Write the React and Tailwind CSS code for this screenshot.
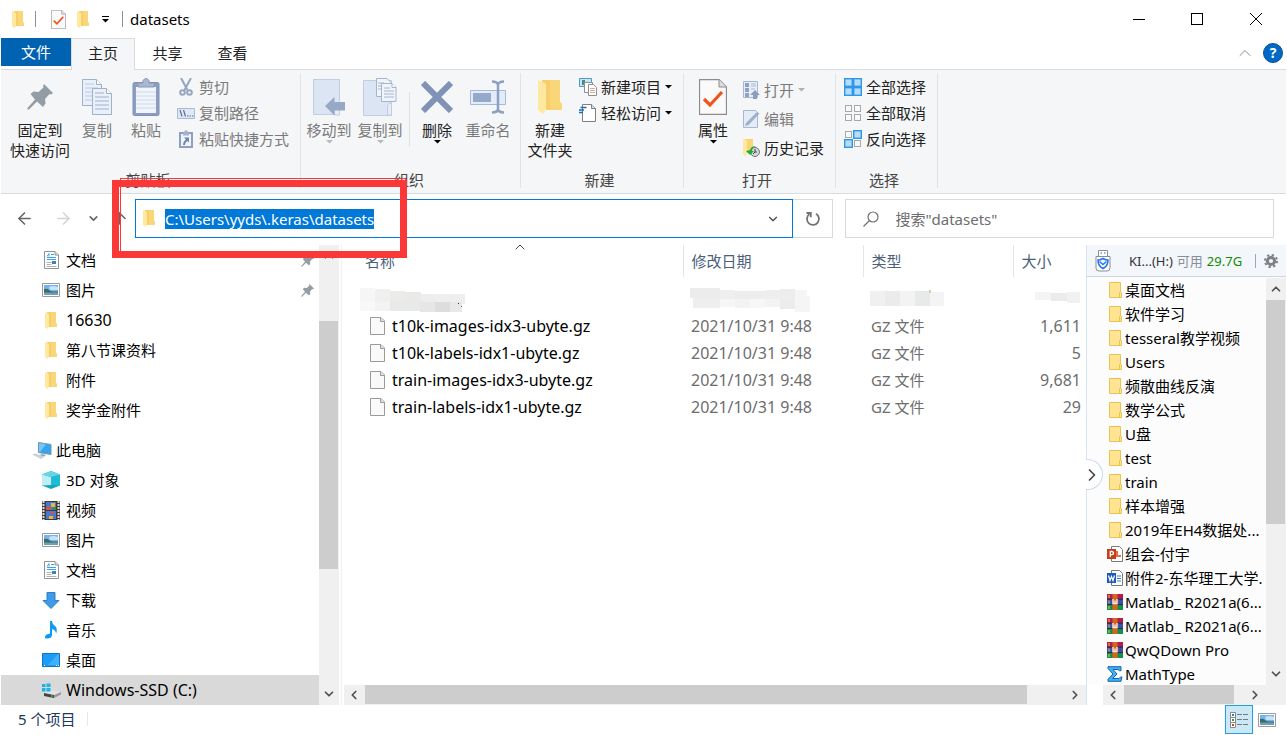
import React, { useState } from 'react';
import { ChevronDown, ChevronUp, ChevronLeft, ChevronRight, ArrowLeft, ArrowRight, ArrowUp } from 'lucide-react';

// --- Icons ---
const FolderIcon = ({ className = 'w-3 h-[17px]' }) => (
  <svg viewBox="0 0 12 17" className={className} preserveAspectRatio="none">
    <path d="M2 0h9v11l1 1v3H3z" fill="#f6cf6b" />
    <path d="M6 0h5v11l1 1v3H6z" fill="#fbdc82" opacity=".6" />
    <path d="M0 0l4 2v13l-1.5 2L0 15z" fill="#ffe8a2" />
  </svg>
);

const ClosedFolderIcon = () => (
  <svg viewBox="0 0 13 16" className="w-[13px] h-4">
    <path d="M.5.5h11v9.5l1 1v4.5H.5z" fill="#ffe593" stroke="#e9c34a" />
    <path d="M10.5 15v-4l1-1.5" fill="none" stroke="#e9c34a" />
  </svg>
);

const CheckDocIcon = ({ className }) => (
  <svg viewBox="0 0 28 36" className={className}>
    <path d="M.5.5H20L27.5 8v27.5H.5z" fill="#fafafa" stroke="#8c8c8c" strokeWidth="1.3" />
    <path d="M20 .5V8h7.5" fill="#dcdcdc" stroke="#8c8c8c" />
    <path d="M5 20l6 6L23 13" fill="none" stroke="#f2541b" strokeWidth="3.2" />
  </svg>
);

const PinIcon = ({ className }) => (
  <svg viewBox="0 0 26 26" className={className} fill="#939da5">
    <path d="M17 0l9 9-2 1.5-1.5-.5-4.5 5 .5 4.5L16 23l-6-5.5L2 25.5H.5V24L8 15.5 3.5 10l3-2.5 5 .5 5-4.5L16 2z" />
  </svg>
);

const CopyIcon = () => (
  <svg viewBox="0 0 30 36" className="w-[30px] h-9" stroke="#9fb0cc">
    <path d="M.5.5h14l5 5v21H.5z" fill="#eaf0f9" />
    <path d="M14.5.5v5h5" fill="#fff" />
    <path d="M3 5h9M3 9h13M3 13h13M3 17h13M3 21h13" stroke="#b9c8de" />
    <path d="M10.5 9.5h14l5 5v21h-19z" fill="#eaf0f9" />
    <path d="M24.5 9.5v5h5" fill="#fff" />
    <path d="M13 14h9M13 18h14M13 22h14M13 26h14M13 30h14" />
  </svg>
);

const PasteIcon = () => (
  <svg viewBox="0 0 28 38" className="w-7 h-[38px]">
    <rect x="1" y="4.5" width="26" height="33" rx="1.5" fill="#8c9dc1" stroke="#7f90b4" />
    <path d="M4 9h20v26H4z" fill="#f0f5fc" />
    <path d="M4 14h20M4 18h20M4 22h20M4 26h20M4 30h20" stroke="#cdd9ea" />
    <path d="M6 5h5V2.5Q14-1.5 17 2.5V5h5v4H6z" fill="#a9b7d0" stroke="#8797b5" />
  </svg>
);

const CutIcon = () => (
  <svg viewBox="0 0 14 18" className="w-3.5 h-[18px]" fill="none" stroke="#94a5c2">
    <path d="M2 0l6.5 12M12 0L5.500 12" strokeWidth="2" />
    <circle cx="3.5" cy="14.5" r="2.3" strokeWidth="2" />
    <circle cx="10.5" cy="14.5" r="2.3" strokeWidth="2" />
  </svg>
);

const CopyPathIcon = () => (
  <svg viewBox="0 0 18 11" className="w-[18px] h-[11px]">
    <path d="M.5.5h17v10H.5z" fill="#dfe9f6" stroke="#a9bad4" />
    <path d="M3 2l2 6.500M6.500 2l2 6.500M10 8h1.500M12.500 8H14M15 8h1.500" stroke="#5c7196" strokeWidth="1.200" />
  </svg>
);

const ShortcutIcon = () => (
  <svg viewBox="0 0 14 18" className="w-3.5 h-[18px]">
    <path d="M1 3h12v14H1z" fill="#f0f5fc" stroke="#8ea0c0" strokeWidth="2" />
    <path d="M4 3.5V2.500h1.500V.5h3v2H10v3H4z" fill="#a3b3ce" />
    <path d="M5 7.5h5v5L8.500 11Q6 12 6 15H4q0-3.500 2.800-5.500z" fill="#6f86b0" />
  </svg>
);

const MoveToIcon = () => (
  <svg viewBox="0 0 32 37" className="w-8 h-[37px]">
    <path d="M.5.5h26v35H.5z" fill="#dbe5f4" stroke="#c0cde2" />
    <path d="M24.5 24q-3 0-3 4v8h5V24" fill="#e6edf8" stroke="#c0cde2" />
    <path d="M12 27l9.5-9v5H32v8.5H21.5v5z" fill="#98a8c7" />
  </svg>
);

const CopyToIcon = () => (
  <svg viewBox="0 0 34 38" className="w-[34px] h-[38px]">
    <path d="M.5 2.5h28v35H.5z" fill="#dbe5f4" stroke="#c0cde2" />
    <path d="M24.5 37v-9q0-3 4-3v12z" fill="#e6edf8" stroke="#c0cde2" />
    <g stroke="#a5b4ce">
      <path d="M13.5.5H24l4 4v14H13.5z" fill="#f0f5fc" />
      <path d="M15 5h6M15 8h6M15 11h6" />
      <path d="M18.5 5.500H29l4 4v14H18.500z" fill="#f0f5fc" />
      <path d="M29 5.500v4h4M21 10h6M21 13h10M21 16h10M21 19h10" fill="#fff" />
    </g>
  </svg>
);

const DeleteIcon = () => (
  <svg viewBox="0 0 32 32" className="w-8 h-8">
    <path d="M2 2l28 28M30 2L2 30" stroke="#8092b5" strokeWidth="6" />
  </svg>
);

const RenameIcon = () => (
  <svg viewBox="0 0 36 34" className="w-9 h-[34px]">
    <path d="M.5 10.500h35v14H.5z" fill="#e3ecf8" stroke="#a5b9d8" />
    <path d="M3 13h18v9H3z" fill="#96a9cb" />
    <path d="M22 1.500q5 0 6 3 1-3 6-3M22 32.500q5 0 6-3 1 3 6 3M28 4v26" fill="none" stroke="#8ba0c2" strokeWidth="2.500" />
  </svg>
);

const NewItemIcon = () => (
  <svg viewBox="0 0 18 18" className="w-[18px] h-[18px]">
    <path d="M.5.5h12v8H.5z" fill="#c7e6f5" stroke="#4a9cc4" />
    <path d="M3 2h3v5H3z" fill="#4c8c7c" />
    <path d="M5.5 4.500h8v10h-8z" fill="#fff" stroke="#8f8f8f" />
    <path d="M9.5 6.500h5l3 3v8h-8z" fill="#fff" stroke="#8f8f8f" />
    <path d="M11 10.500h5M11 12.500h5M11 14.500h5" stroke="#e5a79b" />
  </svg>
);

const EasyAccessIcon = () => (
  <svg viewBox="0 0 18 18" className="w-[18px] h-[18px]">
    <path d="M3.5.5h9l4 4v13h-13z" fill="#fff" stroke="#7f7f7f" />
    <path d="M12.5.5v4h4" fill="#ddd" stroke="#7f7f7f" />
    <path d="M1.5 3.500h6M0 6h5M0 8.500h4" stroke="#1e6fb8" strokeWidth="1.400" />
  </svg>
);

const OpenIcon = () => (
  <svg viewBox="0 0 17 18" className="w-[17px] h-[18px]">
    <path d="M.5.5h14v16H.5z" fill="#e8eef8" stroke="#a9b8d1" />
    <path d="M2 2h4v4H2zM2 7h4v4H2zM2 12h4v4H2z" fill="#8fa1c2" />
    <path d="M8 3h5M8 5h5M8 8h4" stroke="#a9b8d1" />
    <path d="M12 9l5 5h-3v4h-4v-4H7z" fill="#8b9cbf" />
  </svg>
);

const EditIcon = () => (
  <svg viewBox="0 0 17 18" className="w-[17px] h-[18px]">
    <path d="M.5.5h12l2 2v15H.5z" fill="#e4ecf8" stroke="#a9b8d1" />
    <path d="M2 16l1-3L14 2l2.500 1.500L5.500 15z" fill="#9dafcc" />
  </svg>
);

const HistoryIcon = () => (
  <svg viewBox="0 0 17 18" className="w-[17px] h-[18px]">
    <path d="M2 0h8v14H2z" fill="#f9d673" />
    <path d="M0 0l4 2v13l-1.500 2L0 15z" fill="#ffe8a2" />
    <circle cx="12" cy="13" r="4.500" fill="#d5d8d8" stroke="#6f7675" />
    <path d="M12 10v3l-2 2M12 13h2" stroke="#444" fill="none" />
    <path d="M3 12l4-1q1-4 6-4-4 2-4 5h2l-4 4z" fill="#22a83e" />
  </svg>
);

const SELECT_CELLS = [[0, 0], [9, 0], [0, 9], [9, 9]];

const SelectIcon = ({ active }) => (
  <svg viewBox="0 0 18 18" className="w-[18px] h-[18px]">
    {SELECT_CELLS.map(([x, y], i) => (
      active[i]
        ? <rect key={i} x={x + 0.7} y={y + 0.7} width="7.6" height="7.6" fill="#b5ddfb" stroke="#2f97e8" strokeWidth="1.4" />
        : <rect key={i} x={x + 1.5} y={y + 1.5} width="6" height="6" fill="#fafafa" stroke="#a8a8a8" />
    ))}
  </svg>
);

const DocumentIcon = () => (
  <svg viewBox="0 0 15 18" className="w-[15px] h-[18px]">
    <path d="M.5.5H11l3.5 3.5v13.5H.5z" fill="#fff" stroke="#929292" />
    <path d="M11 .5V4h3.5" fill="#ddd" stroke="#929292" />
    <path d="M3 5.500L5 2.500v3M7 3.500h3M3 6.500h9M3 8.500h9" fill="none" stroke="#3aa3e3" />
    <path d="M2.500 11.500h5M2.500 13.500h5M2.500 15.500h10" stroke="#b2b2b2" />
    <path d="M8 10h4v3H8z" fill="#3c80b5" />
  </svg>
);

const PictureIcon = () => (
  <svg viewBox="0 0 18 14" className="w-[18px] h-3.5">
    <path d="M.5.5h17v13H.5z" fill="#fff" stroke="#9b9b9b" />
    <path d="M2 2h14v10H2z" fill="#74b3ee" />
    <path d="M7 4q4-2 9 0v3H8z" fill="#c6e3fa" />
    <path d="M2 6q3-1 5 1t9 1.500V10H2z" fill="#3d6b62" />
    <path d="M2 9.500h14V12H2z" fill="#6c9fb8" />
  </svg>
);

const ComputerIcon = () => (
  <svg viewBox="0 0 20 17" className="w-5 h-[17px]">
    <path d="M6.500.5l12.500 2v10l-12.500-2z" fill="#35a6ec" stroke="#7295ac" />
    <path d="M7 1l7 1.200-6 7.800H7z" fill="#74c6f8" />
    <path d="M9 12l5 1-2 1.500-4-1z" fill="#929da6" />
    <path d="M0 12.500l3-1 10 3-4 2.500z" fill="#cbd2d7" />
  </svg>
);

const CubeIcon = () => (
  <svg viewBox="0 0 18 18" className="w-[18px] h-[18px]">
    <path d="M9 0l9 3.500v11L9 18 0 14.500v-11z" fill="#17a5bd" />
    <path d="M0 3.500L9 6v8L0 14.500z" fill="#bfeff3" />
    <path d="M9 6l9-2.500v11L9 14z" fill="#20bcd6" />
    <path d="M0 3.500L9 0l9 3.500L9 6z" fill="#68d5e3" />
  </svg>
);

const VideoIcon = () => (
  <svg viewBox="0 0 18 19" className="w-[18px] h-[19px]">
    <path d="M0 0h18v19H0z" fill="#3b3b3b" />
    <path d="M1.500 0v19M16.500 0v19" stroke="#dcdcdc" strokeWidth="2" strokeDasharray="2 1" />
    <path d="M4 1h10v8H4zM4 10h10v8H4z" fill="#4a78d0" />
    <path d="M4 6h5v3H4zM9 11h3v2H9z" fill="#e0503a" />
    <path d="M9 2h4v4H9zM7 15h4v3H7z" fill="#e8b92e" />
    <path d="M11 6h3v3h-3z" fill="#3c8c46" />
  </svg>
);

const DownloadIcon = () => (
  <svg viewBox="0 0 18 17" className="w-[18px] h-[17px]">
    <path d="M5 .5h8v8h4L9 16.500 1 8.500h4z" fill="#3f9be8" stroke="#2b7fcb" />
  </svg>
);

const MusicIcon = () => (
  <svg viewBox="0 0 12 18" className="w-3 h-[18px]" fill="#0d9bf5">
    <path d="M5 0h2q0 3 3 5t1 8q0-4-4-5v6q0 3-4 3.500T0 15.500t5-3z" />
  </svg>
);

const DesktopIcon = () => (
  <svg viewBox="0 0 18 14" className="w-[18px] h-3.5">
    <path d="M.5.5h17v13H.5z" fill="#1c9cf6" stroke="#0c74c2" />
    <path d="M6 12L16 1h1v11z" fill="#41b0fb" />
    <path d="M2 12.500h1M14 12.500h1M16 12.500h1" stroke="#fff" />
  </svg>
);

const DriveIcon = () => (
  <svg viewBox="0 0 19 15" className="w-[19px] h-[15px]">
    <path d="M2 10l6-3 11 2-7 4z" fill="#e4e4e4" />
    <path d="M2 10l10 2v3L2 13z" fill="#454545" />
    <path d="M12 12l7-3v2.500L12 15z" fill="#9a9a9a" />
    <path d="M9 13h2" stroke="#4fdc62" />
    <path d="M0 1h3.500v3H0zM4.500.5H8.500V4h-4zM0 5h3.500v3.500H0zM4.500 5h4v3.500h-4z" fill="#1ab2e8" />
  </svg>
);

const FileIcon = () => (
  <svg viewBox="0 0 15 18" className="w-[15px] h-[18px]">
    <path d="M.5.5H11l3.500 3.500v13.500H.5z" fill="#f9f9f9" stroke="#9a9a9a" />
    <path d="M10.500.5v4h4" fill="#e2e2e2" stroke="#9a9a9a" />
  </svg>
);

const PptIcon = () => (
  <svg viewBox="0 0 16 16" className="w-4 h-4">
    <path d="M4.500.5h8l3 3v12h-11z" fill="#fff" stroke="#7b7b7b" />
    <path d="M10 5v5h4" fill="none" stroke="#e66c4b" strokeWidth="2" />
    <path d="M0 3h9v10H0z" fill="#c43e1c" />
    <path d="M3.300 11V5.500h1.500q1.700 0 1.700 1.600T4.800 8.700H3.300" fill="none" stroke="#fff" strokeWidth="1.300" />
  </svg>
);

const WordIcon = () => (
  <svg viewBox="0 0 16 16" className="w-4 h-4">
    <path d="M4.500.5h8l3 3v12h-11z" fill="#fff" stroke="#7b7b7b" />
    <path d="M10 6h4M10 8.500h4M10 11h4" stroke="#2b7cd3" />
    <path d="M0 3h9v10H0z" fill="#185abd" />
    <path d="M1.500 5.500l1.500 5 1.500-4 1.500 4 1.500-5" fill="none" stroke="#fff" strokeWidth="1.200" />
  </svg>
);

const RarIcon = () => (
  <svg viewBox="0 0 16 16" className="w-4 h-4">
    <path d="M0 0h16v5H0z" fill="#b51c4b" />
    <path d="M0 5h16v5.500H0z" fill="#3d4fae" />
    <path d="M0 10.500h16V16H0z" fill="#14924b" />
    <path d="M0 5.200h16M0 10.600h16" stroke="#26263a" />
    <path d="M2 1v3M2 6.500v3M2 12v3" stroke="#f0cc3c" />
    <path d="M5.500 0h5v16h-5z" fill="#d6651f" />
    <path d="M6 5v4.500h4V5M8 6.500v3" fill="none" stroke="#f5e9dc" strokeWidth="1.400" />
  </svg>
);

const SigmaIcon = () => (
  <svg viewBox="0 0 16 16" className="w-4 h-4">
    <path d="M1 .7h13v4h-1.500L11 3.500H6L10 8l-4.500 4.500H12l1.500-1.500H15L14 15.300H1v-2L6 8 1 2.500z" fill="#3fb2f2" stroke="#1763b5" />
  </svg>
);

const UsbIcon = () => (
  <svg viewBox="0 0 16 22" className="w-4 h-[22px]" fill="none">
    <path d="M3.500.5h9v6h-9z" fill="#fff" stroke="#8b8f94" />
    <path d="M5.500 3h1.500M9 3h1.500" stroke="#8b8f94" strokeWidth="1.500" />
    <path d="M1 6.500h14V18q0 3-3 3H4q-3 0-3-3z" fill="#fff" stroke="#8b8f94" />
    <path d="M8 8.500q2 1.500 5 1.500 0 6-5 8.500-5-2.500-5-8.500 3 0 5-1.500z" stroke="#2677f0" strokeWidth="1.600" />
    <path d="M4.500 11.500L8 14.500l3.500-3" stroke="#2677f0" strokeWidth="1.500" />
  </svg>
);

const GearIcon = () => (
  <svg viewBox="0 0 14 14" className="w-3.5 h-3.5" fill="none" stroke="#7d8186">
    <circle cx="7" cy="7" r="3.600" strokeWidth="3" />
    <circle cx="7" cy="7" r="6" strokeWidth="2" strokeDasharray="2.300 2.410" />
  </svg>
);

const RefreshIcon = () => (
  <svg viewBox="0 0 16 16" className="w-4 h-4" fill="none" stroke="#737373" strokeWidth="1.800">
    <path d="M11 2.700A6 6 0 1 1 4.500 3" />
    <path d="M1.500 2h4.300v4.300" />
  </svg>
);

const SearchIcon = () => (
  <svg viewBox="0 0 16 16" className="w-4 h-4" fill="none" stroke="#707070" strokeWidth="1.200">
    <circle cx="10" cy="6" r="5" />
    <path d="M6.500 9.500L.5 15.500" />
  </svg>
);

const DetailsIcon = () => (
  <svg viewBox="0 0 18 16" className="w-[18px] h-4">
    <path d="M.5.500h5v15h-5zM.5 5.500h5M.5 10.500h5" fill="#fff" stroke="#8a8a8a" />
    <path d="M2 3h2" stroke="#2f80c8" strokeWidth="2" />
    <path d="M2 8h2" stroke="#5c8a3c" strokeWidth="2" />
    <path d="M2 13h2" stroke="#c8452f" strokeWidth="2" />
    <path d="M7 2.500h5M13 2.500h5M7 7.500h5M13 7.500h5M7 12.500h5M13 12.500h5" stroke="#7a7a7a" />
  </svg>
);

const Caret = ({ className = '' }) => (
  <svg viewBox="0 0 7 4" className={`w-[7px] h-1 ${className}`}>
    <path d="M0 0h7L3.500 3.500z" fill="currentColor" />
  </svg>
);

// Pixelated smudge over a hidden value
const Smudge = ({ width, blocks }) => (
  <svg viewBox={`0 0 ${width} 26`} width={width} height="26" shapeRendering="crispEdges">
    {blocks.map(([x, y, w, h, fill]) => (
      <rect key={`${x}-${y}`} x={x} y={y} width={w} height={h} fill={fill} />
    ))}
  </svg>
);

// --- Data ---
const SIDEBAR_QUICK = [
  { label: '文档', icon: DocumentIcon, pinned: true },
  { label: '图片', icon: PictureIcon, pinned: true },
  { label: '16630', icon: FolderIcon, latin: true },
  { label: '第八节课资料', icon: FolderIcon },
  { label: '附件', icon: FolderIcon },
  { label: '奖学金附件', icon: FolderIcon },
];

const SIDEBAR_PC = [
  { label: '此电脑', icon: ComputerIcon, root: true },
  { label: '3D 对象', icon: CubeIcon },
  { label: '视频', icon: VideoIcon },
  { label: '图片', icon: PictureIcon },
  { label: '文档', icon: DocumentIcon },
  { label: '下载', icon: DownloadIcon },
  { label: '音乐', icon: MusicIcon },
  { label: '桌面', icon: DesktopIcon },
  { label: 'Windows-SSD (C:)', icon: DriveIcon, latin: true, selected: true },
];

const FILES = [
  { name: 't10k-images-idx3-ubyte.gz', date: '2021/10/31 9:48', type: 'GZ 文件', size: '1,611' },
  { name: 't10k-labels-idx1-ubyte.gz', date: '2021/10/31 9:48', type: 'GZ 文件', size: '5' },
  { name: 'train-images-idx3-ubyte.gz', date: '2021/10/31 9:48', type: 'GZ 文件', size: '9,681' },
  { name: 'train-labels-idx1-ubyte.gz', date: '2021/10/31 9:48', type: 'GZ 文件', size: '29' },
];

const USB_FILES = [
  { label: '桌面文档', icon: ClosedFolderIcon },
  { label: '软件学习', icon: ClosedFolderIcon },
  { label: 'tesseral教学视频', icon: ClosedFolderIcon },
  { label: 'Users', icon: ClosedFolderIcon },
  { label: '频散曲线反演', icon: ClosedFolderIcon },
  { label: '数学公式', icon: ClosedFolderIcon },
  { label: 'U盘', icon: ClosedFolderIcon },
  { label: 'test', icon: ClosedFolderIcon },
  { label: 'train', icon: ClosedFolderIcon },
  { label: '样本增强', icon: ClosedFolderIcon },
  { label: '2019年EH4数据处...', icon: ClosedFolderIcon },
  { label: '组会-付宇', icon: PptIcon },
  { label: '附件2-东华理工大学.', icon: WordIcon },
  { label: 'Matlab_ R2021a(6...', icon: RarIcon },
  { label: 'Matlab_ R2021a(6...', icon: RarIcon },
  { label: 'QwQDown Pro', icon: RarIcon },
  { label: 'MathType', icon: SigmaIcon },
];

const NAME_SMUDGE = [
  [0, 2, 15, 14, '#f6f6f6'], [15, 3, 15, 13, '#f0f0f0'], [30, 5, 15, 11, '#ebebe9'], [45, 6, 16, 10, '#e9eae7'],
  [61, 8, 15, 8, '#ededed'], [76, 8, 29, 10, '#eeeeee'], [0, 16, 15, 9, '#f8f8f8'], [15, 16, 15, 9, '#f3f3f3'],
  [30, 16, 15, 9, '#e9e9e8'], [45, 16, 15, 9, '#e6eae9'], [60, 16, 15, 10, '#e6e6e6'], [75, 16, 15, 10, '#dddddd'],
  [90, 16, 12, 10, '#e8e8e8'], [98, 17, 1, 1, '#16324f'], [101, 20, 1, 1, '#3c6fa0'],
];
const DATE_SMUDGE = [
  [0, 2, 30, 10, '#ececec'], [30, 4, 15, 9, '#efefef'], [45, 5, 30, 8, '#ededed'], [75, 4, 15, 9, '#eeeeee'],
  [90, 3, 15, 10, '#ededed'], [105, 4, 12, 6, '#f2f6f5'], [105, 10, 15, 16, '#f5f5f5'], [3, 12, 27, 10, '#eeeeee'],
  [30, 13, 15, 8, '#f6f6f6'], [45, 13, 15, 9, '#f3f3f3'], [60, 13, 15, 9, '#f7f7f7'], [75, 13, 15, 8, '#f3f3f3'],
  [90, 13, 15, 10, '#ececec'],
];
const TYPE_SMUDGE = [
  [0, 5, 15, 15, '#f0f0f0'], [15, 5, 15, 15, '#ebebeb'], [30, 5, 15, 15, '#f3f3f3'], [45, 5, 15, 15, '#e8eaea'],
  [60, 6, 14, 14, '#f4f4f4'], [59, 4, 2, 3, '#dcc9ae'],
];
const SIZE_SMUDGE = [[0, 6, 16, 8, '#f4f4f4'], [16, 7, 16, 8, '#ebebeb'], [32, 6, 13, 11, '#f1f1f1']];

// --- Ribbon parts ---
const RibbonGroup = ({ title, className, children }) => (
  <section className={`relative flex flex-col pt-px ${className}`}>
    <div className="flex h-[94px] items-start">{children}</div>
    <h2 className="pt-1 pr-1.5 text-center text-[15px] leading-5 text-[#444]">{title}</h2>
    <div className="absolute right-0 top-0.5 bottom-0.5 w-px bg-[#e2e3e4]" />
  </section>
);

const BigButton = ({ icon, lines, disabled, caret, className }) => (
  <button className={`flex shrink-0 flex-col items-center pt-1 text-[15px] leading-5 whitespace-nowrap ${disabled ? 'text-[#7a7a7a]' : 'text-[#222]'} ${className}`}>
    <span className="mb-0.5 flex h-[42px] items-center justify-center">{icon}</span>
    {lines.map((line) => <span key={line}>{line}</span>)}
    {caret && <Caret className={disabled ? 'text-[#b8b8b8]' : 'text-black'} />}
  </button>
);

const SmallButton = ({ icon, label, disabled, caret, className = 'h-[26px]' }) => (
  <button className={`flex items-center text-[15px] leading-5 whitespace-nowrap ${disabled ? 'text-[#7a7a7a]' : 'text-[#222]'} ${className}`}>
    <span className="mr-1 flex w-[18px] justify-center">{icon}</span>
    {label}
    {caret && <Caret className={disabled ? 'ml-1 text-[#b0b0b0]' : 'ml-1 text-black'} />}
  </button>
);

const Ribbon = () => (
  <div className="flex overflow-hidden border-b border-[#dadbdc] bg-[#f5f6f7] pt-px pb-[3px]">
    <RibbonGroup title="剪贴板" className="w-[300px]">
      <BigButton icon={<PinIcon className="w-[26px] h-[26px]" />} lines={['固定到', '快速访问']} className="w-[78px]" />
      <BigButton icon={<CopyIcon />} lines={['复制']} disabled className="w-9" />
      <BigButton icon={<PasteIcon />} lines={['粘贴']} disabled className="w-[62px]" />
      <div className="flex flex-col pt-0.5">
        <SmallButton icon={<CutIcon />} label="剪切" disabled />
        <SmallButton icon={<CopyPathIcon />} label="复制路径" disabled />
        <SmallButton icon={<ShortcutIcon />} label="粘贴快捷方式" disabled />
      </div>
    </RibbonGroup>
    <RibbonGroup title="组织" className="w-[220px] pl-0.5">
      <BigButton icon={<MoveToIcon />} lines={['移动到']} disabled caret className="w-[52px]" />
      <BigButton icon={<CopyToIcon />} lines={['复制到']} disabled caret className="w-[50px]" />
      <div className="ml-1 mt-5 h-[55px] w-px shrink-0 bg-[#e2e3e4]" />
      <BigButton icon={<DeleteIcon />} lines={['删除']} caret className="w-[54px]" />
      <BigButton icon={<RenameIcon />} lines={['重命名']} disabled className="w-12" />
    </RibbonGroup>
    <RibbonGroup title="新建" className="w-[163px]">
      <BigButton icon={<FolderIcon className="w-6 h-[34px]" />} lines={['新建', '文件夹']} className="w-[58px]" />
      <div className="flex flex-col pt-0.5">
        <SmallButton icon={<NewItemIcon />} label="新建项目" caret />
        <SmallButton icon={<EasyAccessIcon />} label="轻松访问" caret />
      </div>
    </RibbonGroup>
    <RibbonGroup title="打开" className="w-[152px]">
      <BigButton icon={<CheckDocIcon className="w-7 h-9" />} lines={['属性']} caret className="w-[58px]" />
      <div className="flex flex-col pt-[3px]">
        <SmallButton icon={<OpenIcon />} label="打开" disabled caret className="h-[29px]" />
        <SmallButton icon={<EditIcon />} label="编辑" disabled className="h-[29px]" />
        <SmallButton icon={<HistoryIcon />} label="历史记录" className="h-[29px]" />
      </div>
    </RibbonGroup>
    <RibbonGroup title="选择" className="w-[102px]">
      <div className="flex flex-col pt-0.5 pl-2">
        <SmallButton icon={<SelectIcon active={[1, 1, 1, 1]} />} label="全部选择" />
        <SmallButton icon={<SelectIcon active={[0, 0, 0, 0]} />} label="全部取消" />
        <SmallButton icon={<SelectIcon active={[0, 1, 1, 0]} />} label="反向选择" />
      </div>
    </RibbonGroup>
  </div>
);

// --- Window chrome ---
const TitleBar = () => (
  <header className="flex h-[38px] items-center justify-between">
    <div className="flex items-center pl-[11px]">
      <FolderIcon />
      <div className="ml-[11px] h-4 w-px bg-[#8f8f8f]" />
      <button className="ml-[15px]" aria-label="属性"><CheckDocIcon className="w-[15px] h-[19px]" /></button>
      <button className="ml-[11px]" aria-label="新建文件夹"><FolderIcon /></button>
      <button className="ml-3 flex w-2 flex-col items-center gap-0.5" aria-label="自定义">
        <span className="h-px w-[7px] bg-black" />
        <Caret className="text-black" />
      </button>
      <div className="ml-[13px] h-4 w-px bg-[#8f8f8f]" />
      <h1 className="ml-[7px] text-[15px] leading-5 text-black">datasets</h1>
    </div>
    <div className="flex h-full">
      <button className="flex w-[58px] items-center justify-center" aria-label="最小化">
        <span className="h-px w-3 bg-black" />
      </button>
      <button className="flex w-[58px] items-center justify-center" aria-label="最大化">
        <span className="h-3 w-3 border border-black" />
      </button>
      <button className="flex w-[60px] items-center justify-center" aria-label="关闭">
        <svg viewBox="0 0 12 12" className="w-3 h-3" stroke="#000"><path d="M0 0l12 12M12 0L0 12" /></svg>
      </button>
    </div>
  </header>
);

const TABS = ['主页', '共享', '查看'];

const TabBar = ({ tab, onChange }) => (
  <nav className="flex h-8 items-stretch border-b border-[#dadbdc] text-[15px] leading-5">
    <button className="mb-[3px] w-[70px] bg-[#0063b1] text-white">文件</button>
    {TABS.map((name) => (
      <button
        key={name}
        onClick={() => onChange(name)}
        className={name === tab
          ? '-mb-px w-16 border border-b-0 border-[#dadbdc] bg-[#f5f6f7] pb-1 text-[#222]'
          : 'w-[65px] pb-0.5 text-[#222]'}
      >
        {name}
      </button>
    ))}
    <div className="ml-auto flex items-center gap-2 pr-[3px] pb-0.5">
      <ChevronUp size={20} strokeWidth={1.2} className="text-[#8a8a8a]" />
      <button className="h-5 w-5 rounded-full border border-[#0a4f94] bg-[#0069c8] text-sm leading-4 font-bold text-white">?</button>
    </div>
  </nav>
);

const AddressBar = () => (
  <div className="relative flex items-center pt-[5px] pr-3 pb-[7px]">
    <div className="flex w-[134px] shrink-0 items-center pl-3.5 text-[#666]">
      <ArrowLeft size={19} strokeWidth={2} />
      <ArrowRight size={19} strokeWidth={2} className="ml-5 text-[#d4d4d4]" />
      <ChevronDown size={13} strokeWidth={3} className="ml-3.5" />
      <ArrowUp size={19} strokeWidth={2} className="ml-2.5" />
    </div>
    <label className="flex h-[39px] flex-[650] items-center border border-[#0078d7] pl-[7px]">
      <FolderIcon />
      <input
        aria-label="地址"
        defaultValue="C:\Users\yyds\.keras\datasets"
        className="ml-2.5 h-5 field-sizing-content bg-[#0078d7] text-[15px] leading-5 text-white outline-none"
      />
      <ChevronDown size={14} strokeWidth={2} className="ml-auto mr-3 text-[#444]" />
    </label>
    <button className="flex h-[39px] w-10 shrink-0 items-center justify-center border border-l-0 border-[#d9d9d9]" aria-label="刷新">
      <RefreshIcon />
    </button>
    <label className="ml-3 flex h-[39px] flex-[410] items-center border border-[#d9d9d9] pl-[17px]">
      <SearchIcon />
      <input
        aria-label="搜索"
        placeholder={'搜索"datasets"'}
        className="ml-4 min-w-0 flex-1 text-[15px] leading-5 outline-none placeholder:text-[#6d6d6d]"
      />
    </label>
    {/* Highlight frame around the path */}
    <div className="pointer-events-none absolute -top-3.5 left-[111px] z-20 h-[78px] w-[295px] border-[7px] border-[#fb3838]">
      <div className="absolute -top-[9px] -right-1.5 -bottom-1.5 left-px border border-[#fb3838]" />
    </div>
  </div>
);

// --- Scrollbars ---
const ARROW = 'shrink-0 text-[#505050]';

const VScroll = ({ before, thumb, after }) => (
  <div className="flex w-5 shrink-0 flex-col items-center bg-[#f0f0f0]">
    <ChevronUp size={14} strokeWidth={3} className={`${ARROW} my-1`} />
    <div style={{ flexGrow: before }} />
    <div className="w-[19px] self-start bg-[#cdcdcd]" style={{ flexGrow: thumb }} />
    <div style={{ flexGrow: after }} />
    <ChevronDown size={14} strokeWidth={3} className={`${ARROW} my-1`} />
  </div>
);

const HScroll = ({ thumb, after }) => (
  <div className="flex h-5 items-center bg-[#f0f0f0]">
    <ChevronLeft size={14} strokeWidth={3} className={`${ARROW} ml-[3px] mr-1`} />
    <div className="h-[19px] self-start bg-[#cdcdcd]" style={{ flexGrow: thumb }} />
    <div style={{ flexGrow: after }} />
    <ChevronRight size={14} strokeWidth={3} className={`${ARROW} mx-1`} />
  </div>
);

// --- Sidebar ---
const SidebarItem = ({ label, icon: Icon, pinned, root, latin, selected }) => (
  <li className={`flex h-[30px] items-center ${root ? 'pl-[31px]' : 'pl-10'} ${latin ? 'text-base leading-5' : ''} ${selected ? 'bg-[#d9d9d9]' : ''}`}>
    <span className="flex w-5 justify-center"><Icon /></span>
    <span className={root ? 'ml-1' : 'ml-[5px]'}>{label}</span>
    {pinned && <PinIcon className="ml-auto mr-[5px] w-[13px] h-[13px]" />}
  </li>
);

const Sidebar = () => (
  <aside className="flex w-[341px] shrink-0 border-r border-[#f0f0f0] pr-0.5">
    <div className="flex-1 text-[15px] leading-5 text-black">
      <ul>{SIDEBAR_QUICK.map((item) => <SidebarItem key={item.label} {...item} />)}</ul>
      <ul className="pt-2.5">{SIDEBAR_PC.map((item) => <SidebarItem key={item.label} {...item} />)}</ul>
    </div>
    <VScroll before={54} thumb={248} after={114} />
  </aside>
);

// --- File list ---
const FileTable = () => (
  <table className="w-full table-fixed border-collapse text-[15px] leading-5">
    <thead>
      <tr className="h-8 text-left text-[#4c607a]">
        <th className="relative border-r border-[#e5e5e5] pl-[23px] font-normal">
          名称
          <ChevronUp size={16} strokeWidth={1.5} className="absolute -top-1.5 left-1/2 text-[#444]" />
        </th>
        <th className="w-[180px] border-r border-[#e5e5e5] pl-2 font-normal">修改日期</th>
        <th className="w-[150px] border-r border-[#e5e5e5] pl-2 font-normal">类型</th>
        <th className="w-[73px] pl-2 font-normal">大小</th>
      </tr>
    </thead>
    <tbody className="text-[#6d6d6d]">
      <tr className="h-[35px] align-bottom">
        <td className="pl-[18px]"><Smudge width={105} blocks={NAME_SMUDGE} /></td>
        <td className="pl-[7px]"><Smudge width={120} blocks={DATE_SMUDGE} /></td>
        <td className="pl-[7px]"><Smudge width={75} blocks={TYPE_SMUDGE} /></td>
        <td className="pl-[22px]"><Smudge width={45} blocks={SIZE_SMUDGE} /></td>
      </tr>
      {FILES.map((f) => (
        <tr key={f.name} className="h-[27px]">
          <td className="pl-7 text-base leading-5 text-black">
            <div className="flex items-center gap-[7px]"><FileIcon />{f.name}</div>
          </td>
          <td className="pl-2 text-base leading-5">{f.date}</td>
          <td className="pl-2">{f.type}</td>
          <td className="pr-[5px] text-right text-base leading-5">{f.size}</td>
        </tr>
      ))}
    </tbody>
  </table>
);

// --- USB drive panel ---
const UsbPanel = () => (
  <aside className="relative flex w-[200px] shrink-0 flex-col border-l border-[#d6e4f3]">
    <div className="flex h-8 items-center border-b border-[#cdd5de] bg-[#f3f6fb] pl-2 text-[13px] leading-5">
      <UsbIcon />
      <span className="ml-[18px] text-[#333]">KI...(H:)</span>
      <span className="ml-1 text-[#8a8f95]">可用</span>
      <span className="ml-1 text-[#128a00]">29.7G</span>
      <div className="ml-auto mr-2 h-3.5 w-px bg-[#9fa5ab]" />
      <button className="mr-2" aria-label="设置"><GearIcon /></button>
    </div>
    <div className="flex flex-1 bg-[#fcfcfc] pt-px">
      <div className="w-[179px] overflow-hidden">
        <ul className="h-[407px] overflow-hidden text-[15px] leading-6 whitespace-nowrap text-black">
          {USB_FILES.map(({ label, icon: Icon }, i) => (
            <li key={i} className="flex h-6 items-center pl-5">
              <span className="mr-0.5 flex w-4 shrink-0 justify-center"><Icon /></span>
              {label}
            </li>
          ))}
        </ul>
      </div>
      <VScroll before={0} thumb={224} after={139} />
    </div>
    <div className="flex">
      <div className="w-4 bg-white" />
      <div className="w-[163px]"><HScroll thumb={112} after={10} /></div>
      <div className="flex-1 bg-[#f0f0f0]" />
    </div>
    <button className="absolute -left-px top-[214px] flex h-[31px] w-[17px] items-center rounded-r-full border border-l-0 border-[#ccd9ea] bg-white" aria-label="收起">
      <ChevronRight size={20} strokeWidth={2} className="-ml-1 shrink-0 text-[#444]" />
    </button>
  </aside>
);

const StatusBar = () => (
  <footer className="flex h-[30px] items-start justify-between text-[15px] leading-5 text-[#1e395b]">
    <div className="flex items-center pt-1 pl-[17px]">
      5 个项目
      <div className="ml-3 h-3.5 w-px bg-[#e8e8e8]" />
    </div>
    <div className="flex items-center gap-[5px] pr-2.5">
      <button className="flex h-[29px] w-7 items-center justify-center border border-[#26a0da] bg-[#cbe8f6]" aria-label="详细信息"><DetailsIcon /></button>
      <button aria-label="大图标"><PictureIcon /></button>
    </div>
  </footer>
);

const App = () => {
  const [tab, setTab] = useState('主页');

  return (
    <div className="flex min-h-screen flex-col bg-white px-px font-['Noto_Sans','Noto_Sans_CJK_SC',sans-serif]">
      <TitleBar />
      <TabBar tab={tab} onChange={setTab} />
      <Ribbon />
      <AddressBar />
      <div className="flex flex-1">
        <Sidebar />
        <main className="flex min-w-0 flex-1 flex-col">
          <div className="flex-1"><FileTable /></div>
          <div className="pl-0.5"><HScroll thumb={663} after={37} /></div>
        </main>
        <UsbPanel />
      </div>
      <StatusBar />
    </div>
  );
};

export default App;
